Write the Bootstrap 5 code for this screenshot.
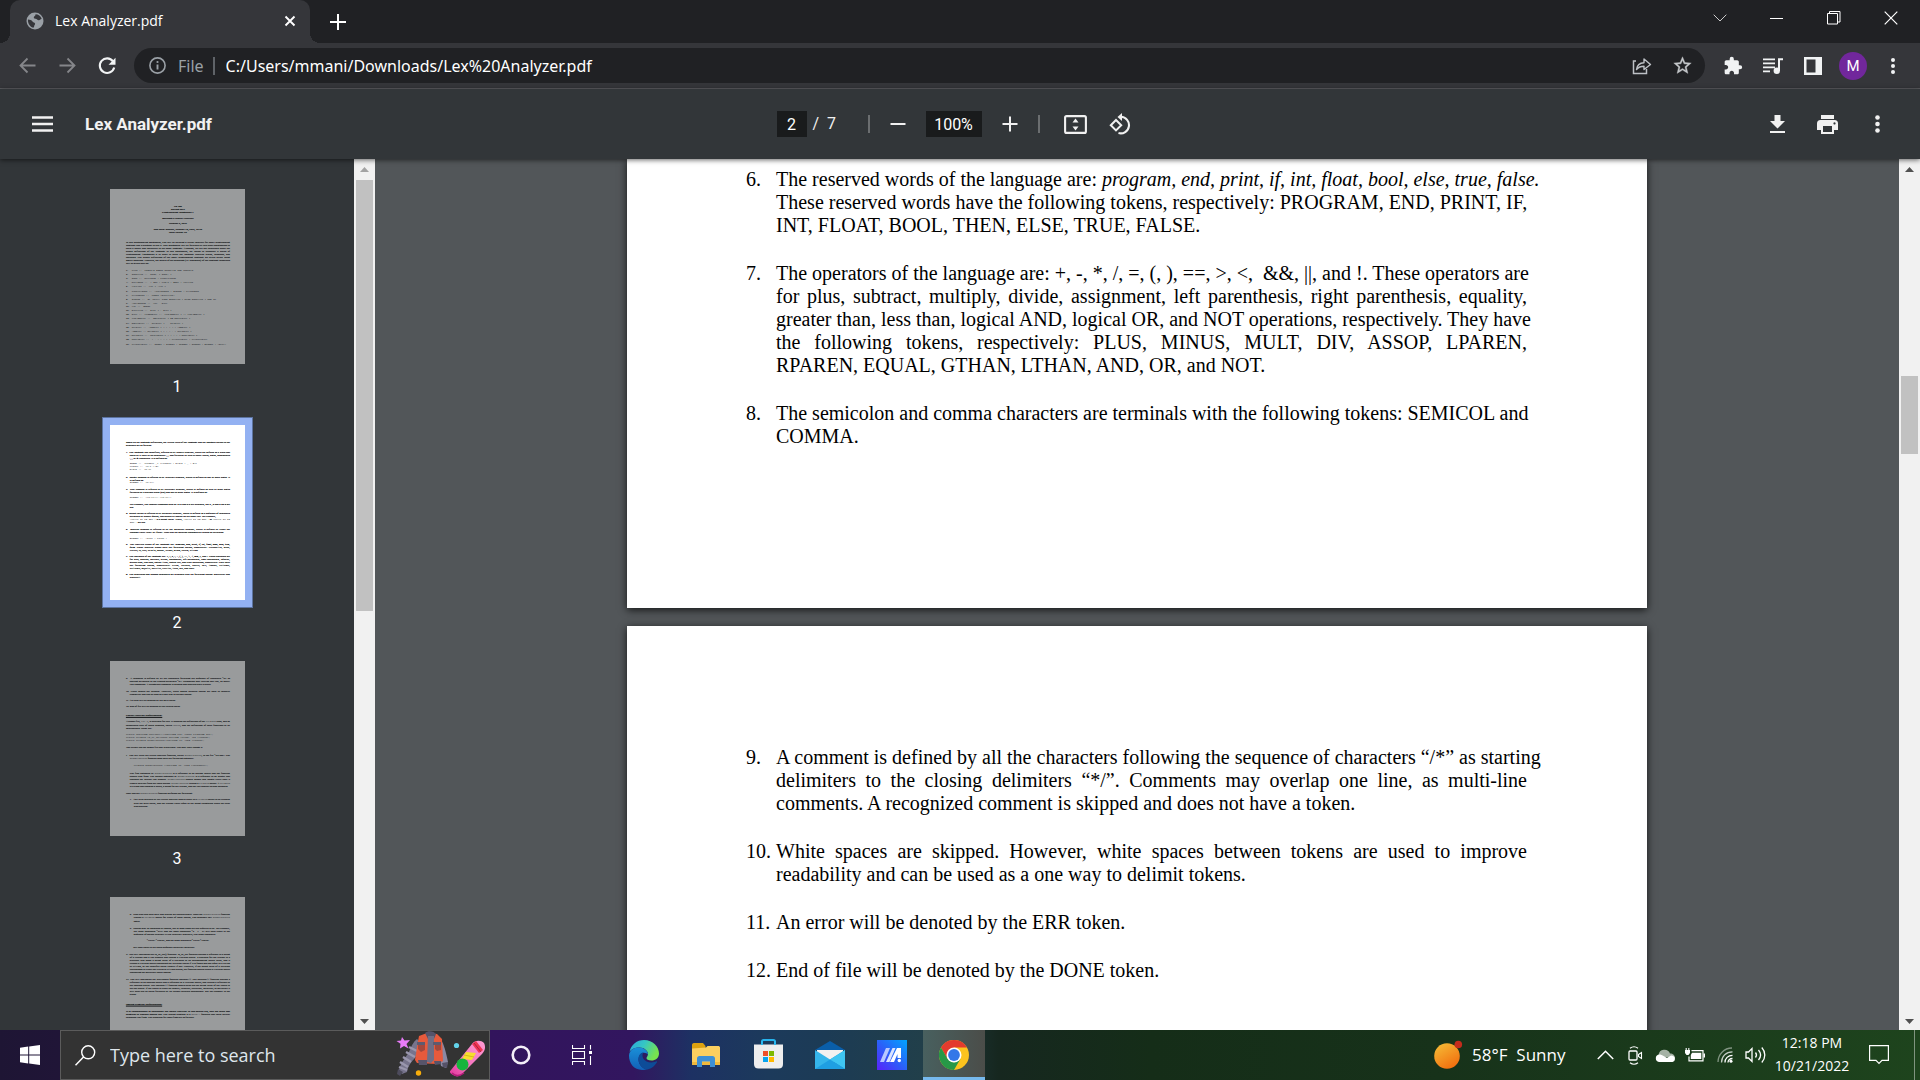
<!DOCTYPE html>
<html lang="en">
<head>
<meta charset="utf-8">
<meta name="viewport" content="width=device-width, initial-scale=1">
<title>Lex Analyzer.pdf</title>
<link href="https://cdn.jsdelivr.net/npm/bootstrap@5.3.0/dist/css/bootstrap.min.css" rel="stylesheet">
<style>
  body { font-family: "Open Sans", "Noto Sans", sans-serif; background: #525659; color: #fff; }
  button { background: none; border: 0; padding: 0; color: inherit; }
  svg { display: block; flex: none; }
  input { border: 0; outline: 0; min-width: 0; }

  /* browser frame */
  .tabstrip { background: #202124; height: 43px; padding-right: 1px; }
  .browser-tab { background: #35363a; width: 300px; margin-left: 10px; border-radius: 10px 10px 0 0; font-size: 14px; padding: 0 14px 2px 16px; position: relative; }
  .browser-tab::before, .browser-tab::after { content: ""; position: absolute; bottom: 0; width: 10px; height: 10px; }
  .browser-tab::before { left: -10px; background: radial-gradient(circle at 0 0, transparent 10px, #35363a 10px); }
  .browser-tab::after { right: -10px; background: radial-gradient(circle at 100% 0, transparent 10px, #35363a 10px); }
  .tab-title { margin-left: 11px; }
  .win-btn { width: 57px; height: 36px; }
  .navrow { background: #35363a; height: 46px; border-bottom: 1px solid #5d5e62; padding: 0 7px; }
  .cell-40 { width: 40px; height: 36px; }
  .omnibox { background: #202124; height: 35px; border-radius: 18px; font-family: "Noto Sans", "Open Sans", sans-serif; font-size: 16px; padding: 0 3px 0 15px; margin: 0 8px 0 7px; }
  .omnibox label { color: #9aa0a6; }
  .omnibox input { background: transparent; color: #fff; }
  .omni-rule { width: 2px; height: 18px; background: #5f6368; margin: 0 11px 0 9px; }
  .avatar { width: 28px; height: 28px; background: #71279c; font: 15px Roboto, sans-serif; }

  /* viewer toolbar */
  .viewer-bar { background: #323639; height: 70px; font-family: Roboto, sans-serif; font-size: 16px; position: relative; z-index: 2; box-shadow: 0 1px 5px rgba(0,0,0,.6); color: #f1f1f1; }
  .viewer-bar h1 { font-size: 17px; font-weight: 700; }
  .viewer-bar input { background: #191b1c; color: #fff; height: 26px; text-align: center; }
  .bar-side { flex: 1 1 0; }
  .bar-actions { gap: 10px; margin-right: 19px; }
  .in-page { width: 30px; }
  .in-zoom { width: 56px; }
  .bar-rule { width: 2px; height: 18px; background: #6b6e70; }
  .page-total { width: 61px; padding-left: 6px; }

  /* thumbnails */
  .thumb-pane { width: 354px; background: #323639; padding-top: 30px; font-family: Roboto, sans-serif; font-size: 16px; overflow: hidden; }
  .thumb { width: 151px; height: 236px; flex: none; gap: 11px; }
  .sheet { width: 135px; height: 175px; background: #fff; display: block; }
  .thumb .sheet { opacity: .5; }
  .thumb.current .sheet { opacity: 1; box-shadow: 0 0 0 7px #93b1f2, 0 0 0 8px #5c739f; }
  .mini { font-family: "Liberation Serif", serif; font-size: 20px; line-height: 23px; color: #000; width: 1020px; height: 1320px; padding: 118px 114px 0 120px; text-align: justify; -webkit-text-stroke: 1px #000; }
  .mini p { margin: 0 0 22px; }
  .mini p.tight { margin-bottom: 0; }
  .mini .in { padding-left: 30px; text-indent: -30px; }
  .mini .in2 { padding-left: 60px; text-indent: -30px; }
  .mini .ind { padding-left: 30px; }
  .mini code, .mini pre { font-family: "Liberation Mono", monospace; font-size: 18px; color: #000; line-height: 23px; margin: 0 0 22px; overflow: visible; -webkit-text-stroke: 0; }
  .mini h3 { font-size: 20px; font-weight: 700; line-height: 23px; text-decoration: underline; text-decoration-thickness: 8px; margin: 0 0 22px; }
  .mini ol.grammar { font-family: "Liberation Mono", monospace; font-size: 18px; line-height: 30px; padding: 0; margin: 20px 0 0; list-style: none; counter-reset: rule; text-align: left; white-space: nowrap; -webkit-text-stroke: 0; }
  .mini ol.grammar li { counter-increment: rule; }
  .mini ol.grammar li::before { content: counter(rule) "."; display: inline-block; width: 44px; font-weight: 700; }

  /* scroll bars */
  .sbar { width: 21px; background: #f1f1f1; padding: 8px 0 6px; z-index: 1; }
  .sbar-thumb { width: 17px; background: #c1c1c1; }
  .side-thumb { height: 431px; margin-top: 8px; }
  .main-thumb { height: 78px; margin-top: 204px; }

  /* document */
  .doc-sheet { width: 1020px; flex: none; background: #fff; color: #000; box-shadow: 0 2px 8px rgba(0,0,0,.75); font-family: "Liberation Serif", serif; font-size: 20px; line-height: 23px; padding: 0 120px 160px 149px; }
  .doc-sheet.upper { padding-top: 9px; }
  .doc-sheet.lower { padding-top: 120px; margin-top: 18px; }
  .doc-list { list-style: none; margin: 0; padding: 0; display: grid; gap: 25px; }
  .doc-list li { position: relative; min-width: 0; }
  .doc-list li > b { position: absolute; left: -30px; font-weight: 400; }
  .ln { display: block; white-space: nowrap; text-align: justify; text-align-last: justify; }
  .ln:last-child { text-align-last: left; }

  /* taskbar */
  .taskbar { height: 50px; background: linear-gradient(90deg, #1e1534 0, #201537 3%, #32145c 25.5%, #32165f 33%, #1d3163 36%, #1c3a5b 40%, #1c3b55 43%, #213f4a 48%, #16271f 52%, #152d18 60%, #17321a 75%, #1e441d 100%); z-index: 3; }
  .start { width: 60px; }
  .search-box { width: 430px; background: #333; border: 1px solid #5b5b5b; padding: 0 2px 0 14px; }
  .search-box input { background: transparent; color: #dfe6ec; font-size: 18px; padding: 0 0 0 14px; }
  .search-box input::placeholder { color: #dfe6ec; opacity: 1; }
  .tb-61 { width: 61px; }
  .tb-62 { width: 62px; }
  .tb-on { background: linear-gradient(90deg, #48605f, #4b4d49); border-bottom: 3px solid #76b9ed; padding-top: 3px; }
  .tray { width: 30px; }
  .weather { font-size: 17px; width: 156px; white-space: pre; }
  .clock { width: 84px; font-size: 14px; line-height: 23px; padding-bottom: 2px; }
  .notify { width: 50px; margin-right: 10px; }
  .desk-edge { width: 6px; border-left: 1px solid #7f947f; }
</style>
<script src="https://cdn.jsdelivr.net/npm/bootstrap@5.3.0/dist/js/bootstrap.bundle.min.js"></script>
</head>
<body class="d-flex flex-column vh-100 overflow-hidden">

<header>
  <div class="tabstrip d-flex">
    <div class="browser-tab d-flex align-items-center">
      <svg width="18" height="18" viewBox="0 0 18 18"><circle cx="9" cy="9" r="8.500" fill="#9aa0a6"/><path d="M2 7.500c2 .2 3.500.6 4.500 2 .8 1.200 2.500.8 2.600 2.200 0 1.300-1.200 1.500-1 2.800.1.800-.8 1.400-1.600 1C3.500 14.300 1.600 11 2 7.500zM9.500 2.200c2.800 0 5.400 2 6.200 4.800-1.300-.2-1.500 1.400-3 1.200-1.500-.3-1.800-1.600-3.300-1.500-1.200 0-2-.9-1.400-2 .5-.9 1.700-.9 1.500-2.500z" fill="#35363a"/></svg>
      <span class="tab-title flex-grow-1">Lex Analyzer.pdf</span>
      <button aria-label="Close tab"><svg width="12" height="12" viewBox="0 0 12 12"><path d="M1.500 1.500l9 9M10.500 1.500l-9 9" stroke="#fff" stroke-width="1.900"/></svg></button>
    </div>
    <button class="ms-3 ps-1" aria-label="New tab"><svg width="16" height="16" viewBox="0 0 16 16"><path d="M8 0v16M0 8h16" stroke="#fff" stroke-width="2"/></svg></button>
    <div class="ms-auto d-flex">
      <button class="win-btn d-flex align-items-center justify-content-center" aria-label="Search tabs"><svg width="14" height="8" viewBox="0 0 14 8"><path d="M.7.700L7 7l6.300-6.300" stroke="#ccc" fill="none"/></svg></button>
      <button class="win-btn d-flex align-items-center justify-content-center" aria-label="Minimize"><svg width="13" height="13" viewBox="0 0 13 13"><path d="M0 6.500h13" stroke="#fff"/></svg></button>
      <button class="win-btn d-flex align-items-center justify-content-center" aria-label="Restore"><svg width="14" height="14" viewBox="0 0 14 14"><path d="M.5 2.500h10v10.500h-10zM2.500 2.500v-2h10.500v10.500h-2.500" stroke="#fff" fill="none"/></svg></button>
      <button class="win-btn d-flex align-items-center justify-content-center" aria-label="Close"><svg width="14" height="14" viewBox="0 0 14 14"><path d="M.7.700l12.600 12.600M13.300.700L.7 13.300" stroke="#fff" stroke-width="1.200"/></svg></button>
    </div>
  </div>
  <div class="navrow d-flex align-items-center">
    <button class="cell-40 d-flex align-items-center justify-content-center" aria-label="Back"><svg width="17" height="17" viewBox="0 0 17 17"><path d="M16.500 8.500H1.500M8.500 1.500l-7 7 7 7" stroke="#85868a" stroke-width="1.800" fill="none"/></svg></button>
    <button class="cell-40 d-flex align-items-center justify-content-center" aria-label="Forward"><svg width="17" height="17" viewBox="0 0 17 17"><path d="M.5 8.500h15M8.500 1.500l7 7-7 7" stroke="#85868a" stroke-width="1.800" fill="none"/></svg></button>
    <button class="cell-40 d-flex align-items-center justify-content-center" aria-label="Reload"><svg width="18" height="18" viewBox="0 0 18 18"><path d="M15 4.300A7.300 7.300 0 1 0 16.200 10.500" stroke="#f1f3f4" stroke-width="2.100" fill="none"/><path d="M17.500.800v7h-7z" fill="#f1f3f4"/></svg></button>
    <div class="omnibox d-flex align-items-center flex-grow-1">
      <svg width="17" height="17" viewBox="0 0 17 17"><circle cx="8.500" cy="8.500" r="7.600" fill="none" stroke="#9aa0a6" stroke-width="1.600"/><path d="M8.500 7.500v5" stroke="#9aa0a6" stroke-width="1.900"/><circle cx="8.500" cy="5" r="1.100" fill="#9aa0a6"/></svg>
      <label for="url" class="ms-2 ps-1">File</label><span class="omni-rule"></span>
      <input id="url" class="flex-grow-1 p-0" value="C:/Users/mmani/Downloads/Lex%20Analyzer.pdf">
      <button class="cell-40 d-flex align-items-center justify-content-center" aria-label="Share"><svg width="20" height="18" viewBox="0 0 20 18"><path d="M4 4H1.500v12.500h13V12" fill="none" stroke="#bdc1c6" stroke-width="1.500"/><path d="M4.500 12.500c.6-4.600 3.500-6.500 7.500-6.700V2l6.500 5.500L12 12.500V9.300c-3 0-5.500.800-7.500 3.200z" fill="none" stroke="#bdc1c6" stroke-width="1.400" stroke-linejoin="round"/></svg></button>
      <button class="cell-40 d-flex align-items-center justify-content-center" aria-label="Bookmark"><svg width="21" height="21" viewBox="0 0 24 24"><path d="M22 9.240l-7.190-.62L12 2 9.190 8.630 2 9.240l5.460 4.730L5.820 21 12 17.270 18.180 21l-1.630-7.030L22 9.240zM12 15.400l-3.760 2.270 1-4.280-3.320-2.880 4.380-.38L12 6.100l1.710 4.040 4.380.38-3.320 2.880 1 4.280L12 15.400z" fill="#c4c7ca" stroke="#c4c7ca" stroke-width=".4"/></svg></button>
    </div>
    <button class="cell-40 d-flex align-items-center justify-content-center" aria-label="Extensions"><svg width="20" height="20" viewBox="0 0 24 24"><path fill="#f1f3f4" d="M20.500 11H19V7c0-1.100-.9-2-2-2h-4V3.500a2.500 2.500 0 0 0-5 0V5H4c-1.100 0-1.990.9-1.990 2v3.800H3.500c1.490 0 2.700 1.210 2.700 2.700s-1.210 2.700-2.700 2.700H2V20c0 1.100.9 2 2 2h3.800v-1.500c0-1.490 1.210-2.700 2.700-2.700s2.700 1.210 2.700 2.700V22H17c1.100 0 2-.9 2-2v-4h1.500a2.500 2.500 0 0 0 0-5z"/></svg></button>
    <button class="cell-40 d-flex align-items-center justify-content-center" aria-label="Media"><svg width="20" height="16" viewBox="0 0 20 16"><path d="M0 1.300h12M0 5.300h12M0 9.300h12M0 13.300h7" stroke="#f1f3f4" stroke-width="1.700"/><path d="M16 13V1.200h4" fill="none" stroke="#f1f3f4" stroke-width="2"/><circle cx="13.800" cy="12.800" r="3.200" fill="#f1f3f4"/></svg></button>
    <button class="cell-40 d-flex align-items-center justify-content-center" aria-label="Side panel"><svg width="18" height="18" viewBox="0 0 18 18"><path fill="#f1f3f4" fill-rule="evenodd" d="M0 0h18v18H0zM2.500 2.500v13h9v-13z"/></svg></button>
    <button class="cell-40 d-flex align-items-center justify-content-center" aria-label="Profile"><span class="avatar rounded-circle d-flex align-items-center justify-content-center">M</span></button>
    <button class="cell-40 d-flex align-items-center justify-content-center" aria-label="Menu"><svg width="4" height="16" viewBox="0 0 4 16"><g fill="#f1f3f4"><circle cx="2" cy="2" r="2"/><circle cx="2" cy="8" r="2"/><circle cx="2" cy="14" r="2"/></g></svg></button>
  </div>
  <div class="viewer-bar d-flex align-items-center">
    <div class="bar-side d-flex align-items-center">
      <button class="ms-4 ps-2" aria-label="Toggle sidebar"><svg width="21" height="16" viewBox="0 0 21 16"><path d="M0 1.500h21M0 8h21M0 14.500h21" stroke="#f1f1f1" stroke-width="2.300"/></svg></button>
      <h1 class="mb-0 ms-4 ps-2">Lex Analyzer.pdf</h1>
    </div>
    <div class="d-flex align-items-center">
      <input class="in-page p-0" aria-label="Page" value="2">
      <span class="page-total">/ &nbsp;7</span>
      <span class="bar-rule"></span>
      <button class="cell-40 d-flex align-items-center justify-content-center ms-2" aria-label="Zoom out"><svg width="16" height="16" viewBox="0 0 16 16"><path d="M.5 8h15" stroke="#f1f1f1" stroke-width="2"/></svg></button>
      <input class="in-zoom p-0 mx-2" aria-label="Zoom" value="100%">
      <button class="cell-40 d-flex align-items-center justify-content-center" aria-label="Zoom in"><svg width="16" height="16" viewBox="0 0 16 16"><path d="M.5 8h15M8 .5v15" stroke="#f1f1f1" stroke-width="2"/></svg></button>
      <span class="bar-rule ms-2"></span>
      <button class="cell-40 d-flex align-items-center justify-content-center ms-3" aria-label="Fit to page"><svg width="23" height="19" viewBox="0 0 23 19"><rect x="1.100" y="1.100" width="20.800" height="16.800" rx="1.500" fill="none" stroke="#f1f1f1" stroke-width="2.100"/><path d="M11.500 3.500l3 4h-6zM11.500 15.500l3-4h-6z" fill="#f1f1f1"/></svg></button>
      <button class="cell-40 d-flex align-items-center justify-content-center ms-1" aria-label="Rotate"><svg width="22" height="22" viewBox="0 0 22 22"><path d="M7 7l5.200 5.200L7 17.400l-5.200-5.200z" fill="none" stroke="#f1f1f1" stroke-width="2"/><path d="M12 3.800a8.300 8.300 0 1 1-2.500 16.300" fill="none" stroke="#f1f1f1" stroke-width="2.100"/><path d="M13 0v8L8.500 4z" fill="#f1f1f1"/></svg></button>
    </div>
    <div class="bar-side d-flex justify-content-end pe-1">
      <div class="bar-actions d-flex">
        <button class="cell-40 d-flex align-items-center justify-content-center" aria-label="Download"><svg width="15" height="18" viewBox="0 0 15 18"><path fill="#f1f1f1" d="M4.500 0h6v6H15l-7.500 7.500L0 6h4.500zM0 16h15v2H0z"/></svg></button>
        <button class="cell-40 d-flex align-items-center justify-content-center" aria-label="Print"><svg width="21" height="19" viewBox="0 0 21 19"><path fill="#f1f1f1" fill-rule="evenodd" d="M4 0h13v4H4zM3.500 5h14A3.500 3.500 0 0 1 21 8.500V15h-4v4H4v-4H0V8.500A3.500 3.500 0 0 1 3.500 5zM6 11v6h9v-6zM17.500 7.300a1.100 1.100 0 1 0 .01 0z"/></svg></button>
        <button class="cell-40 d-flex align-items-center justify-content-center" aria-label="More"><svg width="5" height="18" viewBox="0 0 5 18"><g fill="#f1f1f1"><circle cx="2.500" cy="2.500" r="2.300"/><circle cx="2.500" cy="9" r="2.300"/><circle cx="2.500" cy="15.500" r="2.300"/></g></svg></button>
      </div>
    </div>
  </div>
</header>

<main class="d-flex flex-grow-1 overflow-hidden">
  <nav class="thumb-pane d-flex flex-column align-items-center" aria-label="Pages">
    <button class="thumb d-flex flex-column align-items-center">
      <svg class="sheet" viewBox="0 0 1020 1320"><foreignObject width="1020" height="1320"><div class="mini">
        <div class="text-center fw-bold"><p class="tight">CS 280</p><p class="tight">Spring 2022</p><p>Programming Assignment 1</p><p style="margin-bottom:15px">Building a Lexical Analyzer</p><p>October 4, 2022</p><p class="tight">Due Date: Sunday, October 16, 2022, 23:59</p><p style="margin-bottom:52px">Total Points: 20</p></div>
        <p>In this programming assignment, you will be building a lexical analyzer for small programming language and a program to test it. This assignment will be followed by two other assignments to build a parser and interpreter to the same language. Although, we are not concerned about the syntax definitions of the language in this assignment, we intend to introduce it ahead of Programming Assignment 2 in order to show the language reserved words, constants, and operators. The syntax definitions of the small programming language are given below using EBNF notations. However, the details of the meanings (i.e. semantics) of the language constructs will be given later on.</p>
        <ol class="grammar"><li>Prog ::= PROGRAM IDENT StmtList END PROGRAM</li><li>StmtList ::= Stmt; { Stmt; }</li><li>Stmt ::= DeclStmt | ControlStmt</li><li>DeclStmt ::= ( INT | FLOAT | BOOL ) VarList</li><li class="mb-2">VarList ::= Var { ,Var }</li><li>ControlStmt ::= AssignStmt | IfStmt | PrintStmt</li><li>PrintStmt ::= PRINT (ExprList)</li><li>IfStmt ::= IF (Expr) THEN StmtList [ ELSE StmtList ] END IF</li><li>AssignStmt ::= Var = Expr</li><li>Var ::= IDENT</li><li>ExprList ::= Expr { , Expr }</li><li>Expr ::= LogORExpr ::= LogANDExpr { || LogANDExpr }</li><li class="mb-2">LogANDExpr ::= EqualExpr { &amp;&amp; EqualExpr }</li><li>EqualExpr ::= RelExpr [ == RelExpr ]</li><li>RelExpr ::= AddExpr [ ( &lt; | &gt; ) AddExpr ]</li><li>AddExpr :: MultExpr { ( + | - ) MultExpr }</li><li>MultExpr ::= UnaryExpr { ( * | / ) UnaryExpr }</li><li class="mb-2">UnaryExpr ::= ( - | + | ! ) PrimaryExpr | PrimaryExpr</li><li>PrimaryExpr ::= IDENT | ICONST | RCONST | SCONST | BCONST | (Expr)</li></ol>
      </div></foreignObject></svg>
      <span>1</span>
    </button>
    <button class="thumb current d-flex flex-column align-items-center">
      <svg class="sheet overflow-hidden" viewBox="0 0 1020 1320"><foreignObject width="1020" height="1320"><div class="mini">
        <p style="margin-bottom:30px">Based on the language definitions, the lexical rules of the language and the assigned tokens to the terminals are as follows:</p>
        <p class="in">1. &nbsp;The language has identifiers, referred to by IDENT terminal, which are defined as a word that starts by a letter or an underscore '_', and followed by zero or more letters, digits, underscores '_', or '$' characters. It is defined as:</p>
        <pre class="ind" style="margin-top:-6px">IDENT ::= [Letter _] {(Letter | Digit | _ | $)}
Letter ::= [a-z A-Z]
Digit ::= [0-9]</pre>
        <p class="in tight" style="margin-top:30px">2. &nbsp;Integer constant is referred to by ICONST terminal, which is defined as one or more digits. It is defined as:</p>
        <pre class="ind">ICONST ::= [0-9]+</pre>
        <p class="in">3. &nbsp;Real constant is referred to by RCONST terminal, which is defined as zero or more digits followed by a decimal point (dot) and one or more digits. It is defined as:</p>
        <pre class="ind">RCONST ::= ([0-9]*)\.([0-9]+)</pre>
        <p class="ind">For example, real number constants such as 12.0 and 0.2 are accepted, but 2., 5 and 0.45.4 are not.</p>
        <p class="in tight">4. &nbsp;String literals is referred to by SCONST terminal, which is defined as a sequence of characters delimited by double quotes, that should all appear on the same line. For example,</p>
        <p class="ind" style="margin-bottom:28px"><code>"Hello to CS 280."</code> is a string literal. While, <code>'Hello to CS 280.'</code> or <code>"Hello to CS 280.'</code> are not.</p>
        <p class="in">5. &nbsp;Boolean constant is referred to by the BCONST terminal, which is defined by either the constant value "true" or "false". Note that the Boolean constants are treated as keywords.</p>
        <pre class="ind">BCONST ::= (true | false )</pre>
        <p class="in">6. &nbsp;The reserved words of the language are: <i>program, end, print, if, int, float, bool, else, true, false.</i> These reserved words have the following tokens, respectively: PROGRAM, END, PRINT, IF, INT, FLOAT, BOOL, THEN, ELSE, TRUE, FALSE.</p>
        <p class="in">7. &nbsp;The operators of the language are: +, -, *, /, =, (, ), ==, &gt;, &lt;, &amp;&amp;, ||, and !. These operators are for plus, subtract, multiply, divide, assignment, left parenthesis, right parenthesis, equality, greater than, less than, logical AND, logical OR, and NOT operations, respectively. They have the following tokens, respectively: PLUS, MINUS, MULT, DIV, ASSOP, LPAREN, RPAREN, EQUAL, GTHAN, LTHAN, AND, OR, and NOT.</p>
        <p class="in">8. &nbsp;The semicolon and comma characters are terminals with the following tokens: SEMICOL and COMMA.</p>
      </div></foreignObject></svg>
      <span>2</span>
    </button>
    <button class="thumb d-flex flex-column align-items-center">
      <svg class="sheet" viewBox="0 0 1020 1320"><foreignObject width="1020" height="1320"><div class="mini">
        <p class="in" style="margin-bottom:25px">9. &nbsp;A comment is defined by all the characters following the sequence of characters “/*” as starting delimiters to the closing delimiters “*/”. Comments may overlap one line, as multi-line comments. A recognized comment is skipped and does not have a token.</p>
        <p class="in" style="margin-bottom:25px">10. White spaces are skipped. However, white spaces between tokens are used to improve readability and can be used as a one way to delimit tokens.</p>
        <p class="in" style="margin-bottom:25px">11. An error will be denoted by the ERR token.</p>
        <p class="in" style="margin-bottom:45px">12. End of file will be denoted by the DONE token.</p>
        <h3>Lexical Analyzer Requirements:</h3>
        <p>A header file, <code>lex.h</code>, is provided for you. It contains the definitions of the <code>LexItem</code> class, and an enumerated type of token symbols, called <code>Token</code>, and the definitions of three functions to be implemented. These are:</p>
        <pre style="margin-bottom:32px">extern ostream&amp; operator&lt;&lt;(ostream&amp; out, const LexItem&amp; tok);
extern LexItem id_or_kw(const string&amp; lexeme, int linenum);
extern LexItem getNextToken(istream&amp; in, int&amp; linenum);</pre>
        <p style="margin-bottom:32px">You MUST use the header file that is provided. You may NOT change it.</p>
        <p class="in" style="margin-bottom:32px">I. &nbsp;You will write the lexical analyzer function, called <code>getNextToken</code>, in the file “lex.cpp”. The <code>getNextToken</code> function must have the following signature:</p>
        <pre style="margin:0 0 32px 60px">LexItem getNextToken (istream&amp; in, int&amp; linenumber);</pre>
        <p class="ind" style="margin-bottom:32px">The first argument to <code>getNextToken</code> is a reference to an istream object that the function should read from. The second argument to <code>getNextToken</code> is a reference to an integer that contains the current line number. <code>getNextToken</code> should update this integer every time it reads a newline from the input stream. <code>getNextToken</code> returns a <code>LexItem</code> object. A <code>LexItem</code> is a class that contains a token, a string for the lexeme, and the line number as data members.</p>
        <p>Note that the <code>getNextToken</code> function performs the following:</p>
        <p class="in2">1. &nbsp;Any error detected by the lexical analyzer should result in a <code>LexItem</code> object to be returned with the ERR token, and the lexeme value equal to the string recognized when the error was detected.</p>
      </div></foreignObject></svg>
      <span>3</span>
    </button>
    <button class="thumb d-flex flex-column align-items-center" aria-label="Page 4">
      <svg class="sheet" viewBox="0 0 1020 1320"><foreignObject width="1020" height="1320"><div class="mini">
        <p class="in2" style="margin-bottom:30px">2. &nbsp;Note also that both ERR and DONE are unrecoverable. Once the <code>getNextToken</code> function returns a <code>LexItem</code> object for either of these tokens, you shouldn't call <code>getNextToken</code> again.</p>
        <p class="in2">3. &nbsp;Tokens may be separated by spaces, but in most cases are not required to be. For example, the input characters “3+7” and the input characters “3 &nbsp; + &nbsp; 7” will both result in the sequence of tokens ICONST PLUS ICONST. Similarly, The input characters</p>
        <p class="text-center" style="margin-bottom:30px">“Hello” “World”, and the input characters “Hello”“World”</p>
        <p class="ind" style="margin-bottom:30px">&nbsp; &nbsp; &nbsp;will both result in the token sequence SCONST SCONST.</p>
        <p class="in" style="margin-bottom:30px">II. You will implement the id_or_kw() function. Id_or_kw function accepts a reference to a string of a lexeme and a line number and returns a LexItem object. It searches for the lexeme in a directory that maps a string value of a keyword to its corresponding Token value, and it returns a LexItem object containing the keyword Token if it is found and not equal to a TRUE or FALSE, or the identifier token IDENT if not. However, if the string value of a keyword corresponds to either the TRUE or FALSE tokens, the function should return a LexItem object containing the BCONST token instead.</p>
        <p class="in" style="margin-bottom:50px">III. You will implement the overloaded function operator&lt;&lt;. The operator&lt;&lt; function accepts a reference to an ostream object and a reference to a LexItem object, and returns a reference to the ostream object. The operator&lt;&lt; function should print out the string value of the Token in the tok object. If the Token is either an IDENT, ICONST, RCONST, SCONST, or BCONST it will print out its token followed by its lexeme between parentheses. See the example in the slides.</p>
        <h3 style="margin-bottom:30px">Testing Program Requirements:</h3>
        <p style="margin-bottom:45px"><b>It is recommended to implement the lexical analyzer in one source file, and the main test program in another source file.</b> The testing program is a <code>main()</code> function that takes several command line flags. The notations for input flags are as follows:</p>
      </div></foreignObject></svg>
    </button>
  </nav>
  <div class="sbar d-flex flex-column align-items-center">
    <svg width="9" height="5" viewBox="0 0 9 5"><path d="M4.500 0L9 5H0z" fill="#a3a3a3"/></svg>
    <div class="sbar-thumb side-thumb"></div>
    <svg class="mt-auto" width="9" height="5" viewBox="0 0 9 5"><path d="M0 0h9L4.500 5z" fill="#505050"/></svg>
  </div>
  <section class="flex-grow-1 d-flex flex-column align-items-center overflow-hidden">
    <article class="doc-sheet upper">
      <ol class="doc-list">
        <li><b>6.</b>
          <span class="ln">The reserved words of the language are: <i>program, end, print, if, int, float, bool, else, true, false.</i></span>
          <span class="ln">These reserved words have the following tokens, respectively: PROGRAM, END, PRINT, IF,</span>
          <span class="ln">INT, FLOAT, BOOL, THEN, ELSE, TRUE, FALSE.</span></li>
        <li><b>7.</b>
          <span class="ln">The operators of the language are: +, -, *, /, =, (, ), ==, &gt;, &lt;, &nbsp;&amp;&amp;, ||, and !. These operators are</span>
          <span class="ln">for plus, subtract, multiply, divide, assignment, left parenthesis, right parenthesis, equality,</span>
          <span class="ln">greater than, less than, logical AND, logical OR, and NOT operations, respectively. They have</span>
          <span class="ln">the following tokens, respectively: PLUS, MINUS, MULT, DIV, ASSOP, LPAREN,</span>
          <span class="ln">RPAREN, EQUAL, GTHAN, LTHAN, AND, OR, and NOT.</span></li>
        <li><b>8.</b>
          <span class="ln">The semicolon and comma characters are terminals with the following tokens: SEMICOL and</span>
          <span class="ln">COMMA.</span></li>
      </ol>
    </article>
    <article class="doc-sheet lower">
      <ol class="doc-list">
        <li><b>9.</b>
          <span class="ln">A comment is defined by all the characters following the sequence of characters “/*” as starting</span>
          <span class="ln">delimiters to the closing delimiters “*/”. Comments may overlap one line, as multi-line</span>
          <span class="ln">comments. A recognized comment is skipped and does not have a token.</span></li>
        <li><b>10.</b>
          <span class="ln">White spaces are skipped. However, white spaces between tokens are used to improve</span>
          <span class="ln">readability and can be used as a one way to delimit tokens.</span></li>
        <li><b>11.</b><span class="ln">An error will be denoted by the ERR token.</span></li>
        <li><b>12.</b><span class="ln">End of file will be denoted by the DONE token.</span></li>
      </ol>
    </article>
  </section>
  <div class="sbar d-flex flex-column align-items-center">
    <svg width="9" height="5" viewBox="0 0 9 5"><path d="M4.500 0L9 5H0z" fill="#505050"/></svg>
    <div class="sbar-thumb main-thumb"></div>
    <svg class="mt-auto" width="9" height="5" viewBox="0 0 9 5"><path d="M0 0h9L4.500 5z" fill="#505050"/></svg>
  </div>
</main>

<footer class="taskbar d-flex flex-shrink-0">
  <button class="start d-flex align-items-center justify-content-center" aria-label="Start"><svg width="20" height="20" viewBox="0 0 20 20"><path fill="#fff" d="M0 2.800L8.200 1.600v7.900H0zM9.200 1.500L20 0v9.500H9.200zM0 10.500h8.200v7.900L0 17.200zM9.200 10.500H20V20L9.200 18.500z"/></svg></button>
  <div class="search-box d-flex align-items-center">
    <svg width="21" height="21" viewBox="0 0 21 21"><circle cx="13.200" cy="7.300" r="6.500" fill="none" stroke="#fff" stroke-width="1.400"/><path d="M8.500 12L.5 20.300" stroke="#fff" stroke-width="1.500"/></svg>
    <input class="flex-grow-1" aria-label="Search" placeholder="Type here to search">
    <svg width="92" height="48" viewBox="0 0 92 48">
      <defs><linearGradient id="board" x1="1" y1="0" x2="0" y2="1"><stop offset="0" stop-color="#ff9bd2"/><stop offset=".6" stop-color="#f472bd"/><stop offset="1" stop-color="#e0359b"/></linearGradient></defs>
      <path d="M7 6l2.500 3.500 5.500-.5-3.500 4 2 4.500L9 15l-4 2.500.5-4.700L1.500 10l4.500-.5z" fill="#e87bf8"/>
      <path d="M22 8c-4 3-6 8-8 13-3 5-8 10-10 18l3 4 5-2c1-6 4-10 8-14 4-5 5-11 4-17z" fill="#77748c"/>
      <path d="M14 16l8 4M11 21l9 5M8 26l8 5M5 31l8 5M4 36l8 3" stroke="#9a97ad" stroke-width="2.400"/>
      <path d="M3 38l5 3-3 4-3-2z" fill="#4d4b5c"/>
      <path d="M44 7c4 3 6 10 9 24l-2 6-5-2-5-24z" fill="#8b89a3"/><path d="M47 32l6-1-1 6-4-1z" fill="#555268"/>
      <path d="M24 5l8-3 10 1 5 5 1 22-6 3-20-1-2-3 2-13z" fill="#e75a3c"/>
      <path d="M30 2c3-3 9-2 11 1l-2 5h-6z" fill="#55536a"/><path d="M33 5h6v24l-3 3-4-1z" fill="#706e85"/>
      <path d="M23 12h7v7l-4 2-3-3zM40 12h6v7l-4 1-2-2z" fill="#a2483d"/><path d="M22 11h8v3h-8zM38 11h8v3h-8z" fill="#5e5a6f"/>
      <path d="M23 29h9v5h-8zM39 30h7v3l-6 1z" fill="#57546a"/>
      <circle cx="61.500" cy="14.500" r="2.600" fill="#63d3ea"/><circle cx="23.500" cy="42" r="2.700" fill="#f7ad0b"/>
      <path d="M56 39l21-26c3-4 9-4 12-1 2 4 1 8-2 11L67 43c-3 3-6 3-9 1s-4-3-2-5z" fill="url(#board)"/>
      <path d="M77 13l7 9 4-3-7-9z" fill="#ef3452"/><path d="M79 12l7 9" stroke="#a91f43"/><path d="M71 21l10 1-4 7-10-1z" fill="#f6df2e"/><path d="M69 24l10 2" stroke="#d5ba1b"/>
      <circle cx="67.500" cy="33.500" r="6" fill="#16b43d"/><path d="M57 42c4 4 8 3 12 0" stroke="#b51c7b" stroke-width="1.500" fill="none"/>
    </svg>
  </div>
  <button class="tb-61 d-flex align-items-center justify-content-center" aria-label="Cortana"><svg width="20" height="20" viewBox="0 0 20 20"><circle cx="10" cy="10" r="8.300" fill="none" stroke="#f4eff8" stroke-width="2.600"/></svg></button>
  <button class="tb-62 d-flex align-items-center justify-content-center" aria-label="Task view"><svg width="20" height="20" viewBox="0 0 20 20"><path d="M.5 0v3.500h12V0M.5 20v-3.500h12V20M.5 6.500h12v7H.500zM18.500 0v4.500M18.500 11v9" stroke="#fff" stroke-width="1.100" fill="none"/><path d="M17 6h3v3h-3z" fill="#fff"/></svg></button>
  <button class="tb-62 d-flex align-items-center justify-content-center" aria-label="Edge"><svg width="30" height="30" viewBox="0 0 30 30">
    <defs><linearGradient id="eg1" x1="0" y1="0" x2="1" y2=".4"><stop offset="0" stop-color="#2aa6df"/><stop offset=".5" stop-color="#35c6c4"/><stop offset="1" stop-color="#77e34e"/></linearGradient><linearGradient id="eg2" x1="0" y1="0" x2="0" y2="1"><stop offset="0" stop-color="#1a90d8"/><stop offset="1" stop-color="#1260b6"/></linearGradient></defs>
    <path d="M.5 12C2 4.500 8 0 15 0c9 0 15 6.500 15 13.500 0 4.500-3.500 7-7.500 7-3.500 0-5-1-5-2.500 0-1 1.500-2 1.500-4 0-3-3.500-6.500-8.500-6.500C5.500 7.500 2 9.500.5 12z" fill="url(#eg1)"/>
    <path d="M0 15.500C.5 10 5 7.500 9.500 7.500c5.500 0 9.500 3.500 9.500 7-1.500-2-7-3.500-9 2-2 6 2.500 12 8 13C7 32 0 25 0 15.500z" fill="url(#eg2)"/>
    <path d="M9.500 18c.3-3 2-5.300 5-5.800-3 4 .5 10.300 8 10.300 2 0 3.500-.5 5-1.200.7 0 .7.500.3 1.100C25 27 21 29.300 17 29.500c-4.500-1.500-8-6-7.500-11.500z" fill="#0d4c98"/></svg></button>
  <button class="tb-62 d-flex align-items-center justify-content-center" aria-label="File Explorer"><svg width="28" height="24" viewBox="0 0 28 24"><path d="M0 2c0-1 .5-2 2-2h9l2.500 3v4H0z" fill="#dda10f"/><path d="M0 5.500l14-1 1.500-1.500H26c1 0 2 .5 2 1.500V22H0z" fill="#fccf5f"/><path d="M0 19h28v3H0z" fill="#f0b93c"/><path d="M5 24V15.500c0-1.500 1-2.500 2.500-2.500h13c1.500 0 2.500 1 2.500 2.500V24h-5v-5.500h-8V24z" fill="#3d8fd5"/></svg></button>
  <button class="tb-62 d-flex align-items-center justify-content-center" aria-label="Store"><svg width="29" height="32" viewBox="0 0 29 32"><path d="M8 7V2.500C8 1.500 8.500 1 9.500 1h10c1 0 1.500.5 1.500 1.500V7" fill="none" stroke="#27b3ec" stroke-width="2"/><path d="M0 5.500h29V25c0 3-1.500 4.500-4.500 4.500h-20C1.500 29.500 0 28 0 25z" fill="#eee"/><path d="M8 2v4M21 2v4" stroke="#2ab9f0" stroke-width="2"/><path d="M9 12h5v5H9z" fill="#f0502a"/><path d="M15 12h5v5h-5z" fill="#7eb900"/><path d="M9 18h5v5H9z" fill="#08a4ef"/><path d="M15 18h5v5h-5z" fill="#ffb900"/></svg></button>
  <button class="tb-62 d-flex align-items-center justify-content-center" aria-label="Mail"><svg width="30" height="28" viewBox="0 0 30 28"><path d="M0 9L15 0l15 9z" fill="#0a5ea9"/><path d="M2 9h26v12H2z" fill="#f3f1f0"/><path d="M0 9l30 19H0z" fill="#35b5ea"/><path d="M30 9v19L15 18.500z" fill="#1a9ade"/><path d="M30 9L15 18.500 30 28z" fill="#3fc5f2"/><path d="M0 28l15-9.500L30 28z" fill="#1f9fe2"/></svg></button>
  <button class="tb-62 d-flex align-items-center justify-content-center" aria-label="MyASUS"><svg width="30" height="30" viewBox="0 0 30 30"><defs><linearGradient id="asus" x1="0" y1="1" x2="1" y2="0"><stop offset="0" stop-color="#5a22fb"/><stop offset=".5" stop-color="#2a62f8"/><stop offset="1" stop-color="#00a5ff"/></linearGradient></defs><path fill="url(#asus)" d="M0 0h30v30H0z"/><path d="M9 8h4L7 22H3z" fill="#b9c8ff"/><path d="M15.500 8h3L12.500 22H9z" fill="#dbe4ff"/><path d="M20 8h4v10h-3.500v-4l-3.500 8h-4z" fill="#fff"/><circle cx="22.300" cy="20.500" r="1.700" fill="#fff"/></svg></button>
  <button class="tb-62 tb-on d-flex align-items-center justify-content-center" aria-label="Chrome"><svg width="30" height="30" viewBox="0 0 30 30"><circle cx="15" cy="15" r="15" fill="#fcc31e"/><path d="M2 7.500A15 15 0 0 1 28 7.500H15L8.500 19z" fill="#e33b2e"/><path d="M2 7.500A15 15 0 0 0 15 30l6.500-11.200L15 22.500l-6.500-3.700z" fill="#279847"/><circle cx="15" cy="15" r="7.500" fill="#fff"/><circle cx="15" cy="15" r="5.900" fill="#3377e8"/></svg></button>

  <div class="ms-auto d-flex align-items-stretch">
    <button class="weather d-flex align-items-center"><svg class="me-2" width="30" height="30" viewBox="0 0 30 30"><defs><linearGradient id="sun" x1=".2" y1="0" x2=".8" y2="1"><stop offset="0" stop-color="#f5b935"/><stop offset="1" stop-color="#f26a0c"/></linearGradient></defs><circle cx="13" cy="16" r="12.800" fill="url(#sun)"/><circle cx="24.300" cy="4.500" r="3.800" fill="#c42b1c"/></svg><span>58°F  Sunny</span></button>
    <button class="tray d-flex align-items-center justify-content-center" aria-label="Hidden icons"><svg width="17" height="10" viewBox="0 0 17 10"><path d="M.8 9l7.700-7.700L16.200 9" fill="none" stroke="#fff" stroke-width="1.500"/></svg></button>
    <button class="tray d-flex align-items-center justify-content-center" aria-label="Meet now"><svg width="16" height="19" viewBox="0 0 16 19"><path d="M3 2.200C5.500.400 8.500.400 11 2.200M3 16.800c2.500 1.800 5.500 1.800 8 0" fill="none" stroke="#fff" stroke-width="1.200"/><rect x="2" y="5" width="8" height="9" rx="1" fill="none" stroke="#fff" stroke-width="1.300"/><path d="M11.500 8.500l3-2v6l-3-2z" fill="none" stroke="#fff" stroke-width="1.100"/></svg></button>
    <button class="tray d-flex align-items-center justify-content-center" aria-label="OneDrive"><svg width="20" height="13" viewBox="0 0 20 13"><path d="M3.500 6A6 6 0 0 1 15 4.500c3 0 5 2 5 4.500L9 8z" fill="#a5b2a5"/><path d="M4 13a3.800 3.800 0 0 1 0-7.500c2 0 3.200.5 5 1.700L12 9l4-2.500c2.500 0 4 1.500 4 3.500a3.200 3.200 0 0 1-3.500 3z" fill="#fff"/></svg></button>
    <button class="tray d-flex align-items-center justify-content-center" aria-label="Battery"><svg width="20" height="14" viewBox="0 0 20 14"><path d="M6.500 2.600H18v10.300H4V8.500" fill="none" stroke="#fff" stroke-width="1.200"/><path d="M7 4.700h9.300v6.200H5.800V7zM18.500 5.500H20v4h-1.500zM0 2h5v3L3.500 7h-2L0 5z" fill="#fff"/><path d="M1.200 0v2M3.800 0v2" stroke="#fff" stroke-width="1.100"/></svg></button>
    <button class="tray d-flex align-items-center justify-content-center" aria-label="Wi-Fi"><svg width="16" height="16" viewBox="0 0 16 16"><g fill="none" stroke="#fff" stroke-width="1.300"><path d="M1 15C1 7.500 7 1 15 1" opacity=".45"/><path d="M4.500 15.500C4.500 9.500 9 4.800 15.500 4.800" opacity=".75"/><path d="M8 15.500c0-4 3-7.200 7.500-7.200M11 15.500c0-2.200 1.500-4 4.500-4"/></g><circle cx="14" cy="14.300" r="1.500" fill="#fff"/></svg></button>
    <button class="tray d-flex align-items-center justify-content-center" aria-label="Volume"><svg width="21" height="18" viewBox="0 0 21 18"><path d="M1 6h2.500L7 2.500v13L3.500 12H1z" fill="none" stroke="#fff" stroke-width="1.300"/><path d="M10.500 6.500c1.200 1.500 1.200 3.500 0 5M13.500 4c2.500 3 2.500 7 0 10M16.800 1.500c4 4.500 4 10.500 0 15" fill="none" stroke="#fff" stroke-width="1.300"/></svg></button>
    <button class="clock text-center text-nowrap">12:18 PM<br>10/21/2022</button>
    <button class="notify d-flex align-items-center justify-content-center" aria-label="Notifications"><svg width="20" height="20" viewBox="0 0 20 20"><path d="M.6.600h18.800v14.800h-6.400l-3 3-3-3H.600z" fill="none" stroke="#fff" stroke-width="1.200"/></svg></button>
    <span class="desk-edge"></span>
  </div>
</footer>
</body>
</html>
